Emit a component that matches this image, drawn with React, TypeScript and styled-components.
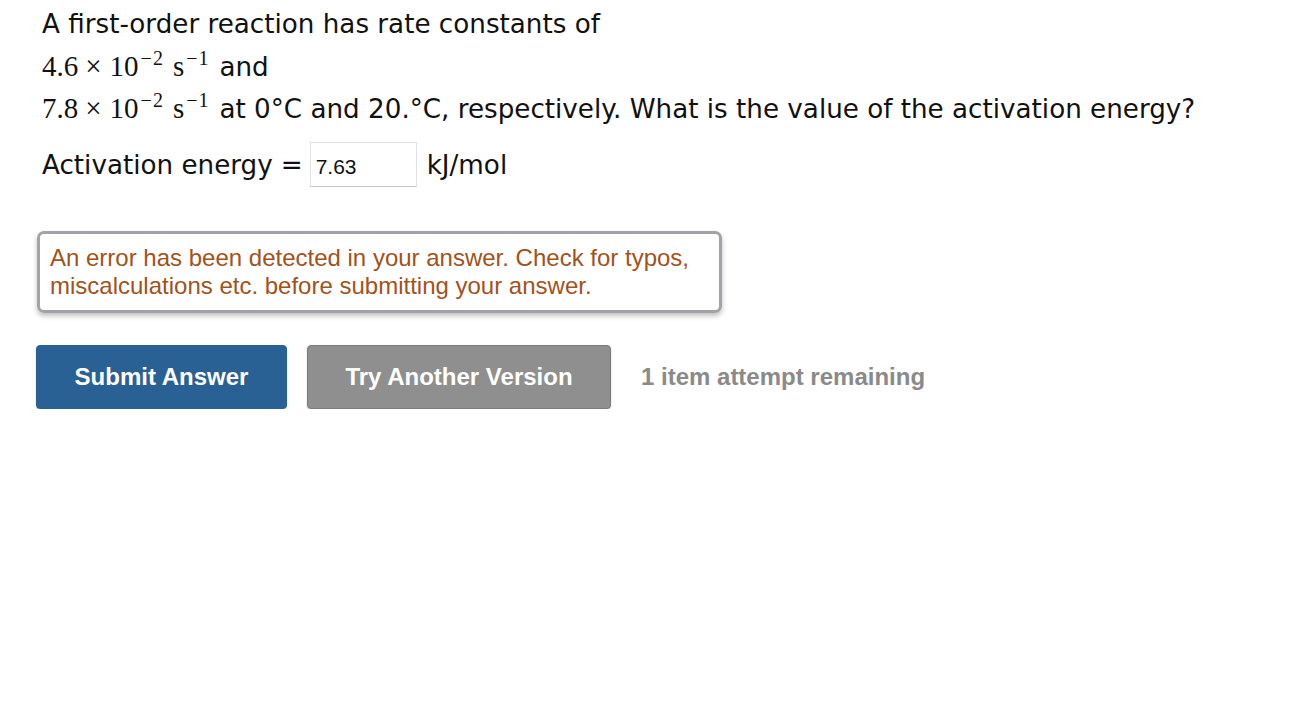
import React from "react";
import styled, { createGlobalStyle } from "styled-components";

const Global = createGlobalStyle`
  html, body { margin: 0; padding: 0; background: #fff; }
  body { font-family: "DejaVu Sans", Verdana, sans-serif; color: #111; }
`;

const Page = styled.div`
  padding: 3px 0 0 42px;
  width: 1248px;
  box-sizing: border-box;
`;

const Line = styled.div`
  font-size: 26.2px;
  line-height: 42px;
  height: 42px;
  white-space: nowrap;
`;

const Math = styled.span`
  font-family: "Liberation Serif", "DejaVu Serif", serif;
  font-size: 29px;
  margin-right: 10px;
  color: #111;
`;

const Times = styled.span`
  margin: 0 8px 0 7px;
`;

const Unit = styled.span`
  margin-left: 9px;
`;

const Sup = styled.sup`
  font-size: 20px;
  vertical-align: 11px;
  line-height: 0;
  margin-left: 2px;
  letter-spacing: 1px;
`;

const AnswerRow = styled.div`
  display: flex;
  align-items: center;
  margin-top: 13px;
  font-size: 26.2px;
  height: 45px;
`;

const Eq = styled.span`
  margin: 0 7px 0 8px;
`;

const Input = styled.div`
  box-sizing: border-box;
  width: 107px;
  height: 45px;
  border: 1px solid #e2e2e2;
  border-bottom-color: #c8c8c8;
  font-family: "Liberation Sans", Arial, sans-serif;
  font-size: 21px;
  display: flex;
  align-items: center;
  padding: 4px 0 0 5px;
  margin-right: 10px;
  color: #111;
`;

const ErrorBox = styled.div`
  box-sizing: border-box;
  margin: 44px 0 0 -5px;
  width: 685px;
  height: 82px;
  border: 3px solid #a3a3a7;
  border-radius: 7px;
  box-shadow: 0 3px 5px rgba(0, 0, 0, 0.25);
  padding: 10px 10px 0 10px;
  font-family: "Liberation Sans", Arial, sans-serif;
  font-size: 24px;
  line-height: 28px;
  color: #a2521b;
  white-space: nowrap;
`;

const Actions = styled.div`
  display: flex;
  align-items: center;
  gap: 20px;
  margin: 32px 0 0 -6px;
`;

const Button = styled.div<{ $variant: "primary" | "secondary" }>`
  box-sizing: border-box;
  height: 64px;
  display: flex;
  align-items: center;
  justify-content: center;
  border-radius: 4px;
  font-family: "Liberation Sans", Arial, sans-serif;
  font-weight: bold;
  font-size: 24px;
  color: #fff;
  background: ${(p) => (p.$variant === "primary" ? "#2a6195" : "#8f8f8f")};
  border: 1px solid ${(p) => (p.$variant === "primary" ? "#2a6195" : "#7b7b7b")};
  box-shadow: 0 1px 2px rgba(0, 0, 0, 0.2);
  width: ${(p) => (p.$variant === "primary" ? "251px" : "304px")};
`;

const Remaining = styled.span`
  margin-left: 10px;
  font-family: "Liberation Sans", Arial, sans-serif;
  font-weight: bold;
  font-size: 24px;
  color: #8a8a8a;
`;

function Sci({ m }: { m: string }) {
  return (
    <Math>
      {m}
      <Times>×</Times>10<Sup>−2</Sup>
      <Unit>s</Unit>
      <Sup>−1</Sup>
    </Math>
  );
}

export default function App() {
  return (
    <>
      <Global />
      <Page>
        <Line>A first-order reaction has rate constants of</Line>
        <Line>
          <Sci m="4.6" />
          and
        </Line>
        <Line>
          <Sci m="7.8" />
          at 0°C and 20.°C, respectively. What is the value of the activation energy?
        </Line>
        <AnswerRow>
          Activation energy<Eq>=</Eq>
          <Input>7.63</Input>
          kJ/mol
        </AnswerRow>
        <ErrorBox>
          An error has been detected in your answer. Check for typos,
          <br />
          miscalculations etc. before submitting your answer.
        </ErrorBox>
        <Actions>
          <Button $variant="primary">Submit Answer</Button>
          <Button $variant="secondary">Try Another Version</Button>
          <Remaining>1 item attempt remaining</Remaining>
        </Actions>
      </Page>
    </>
  );
}
